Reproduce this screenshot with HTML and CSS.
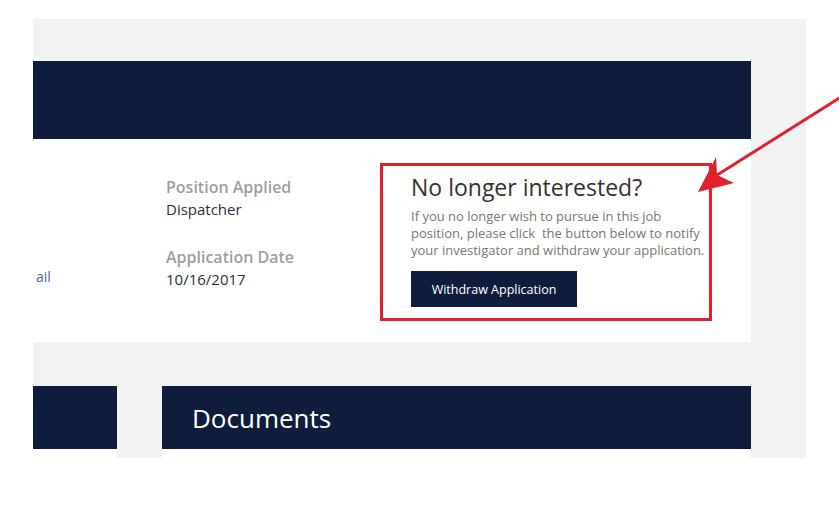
FILE: index.html
```html
<!DOCTYPE html>
<html lang="en">
<head>
<meta charset="utf-8">
<title>Application status</title>
<link rel="stylesheet" href="styles.css">
</head>
<body>
<div class="frame">
  <div class="content">
    <div class="topbar"></div>
    <div class="card">
      <div class="col-contact">
        <a class="email-link" href="#">ail</a>
      </div>
      <div class="col-info">
        <div class="field">
          <div class="field-label">Position Applied</div>
          <div class="field-value">Dispatcher</div>
        </div>
        <div class="field">
          <div class="field-label">Application Date</div>
          <div class="field-value">10/16/2017</div>
        </div>
      </div>
      <div class="withdraw-box">
        <h2 class="withdraw-title">No longer interested?</h2>
        <p class="withdraw-text">If you no longer wish to pursue in this job<br>position, please click&nbsp; the button below to notify<br>your investigator and withdraw your application.</p>
        <button class="withdraw-btn" type="button">Withdraw Application</button>
      </div>
    </div>
    <div class="panels">
      <div class="panel panel-narrow">
        <div class="panel-head"></div>
        <div class="panel-body"></div>
      </div>
      <div class="panel panel-wide">
        <div class="panel-head"><span class="panel-title">Documents</span></div>
        <div class="panel-body"></div>
      </div>
    </div>
  </div>
</div>
<svg class="arrow" width="839" height="505" viewBox="0 0 839 505" aria-hidden="true">
  <line x1="841" y1="97" x2="714" y2="177" stroke="#e0202b" stroke-width="3"/>
  <polygon points="698,192 716,157 717,175 734,183" fill="#e0202b"/>
</svg>
</body>
</html>
```

FILE: styles.css
```css
html, body {
  margin: 0;
  padding: 0;
  background: #ffffff;
}

body {
  font-family: "Open Sans", "Liberation Sans", sans-serif;
  width: 839px;
  height: 505px;
  overflow: hidden;
  position: relative;
}

.frame {
  margin: 19px 0 0 33px;
  width: 773px;
  height: 439px;
  background: #f2f2f2;
  overflow: hidden;
  padding-top: 42px;
  box-sizing: border-box;
}

.content {
  width: 718px;
}

.topbar {
  height: 78px;
  background: #101c3c;
}

.card {
  height: 203px;
  background: #ffffff;
  display: flex;
  overflow: hidden;
}

.col-contact {
  width: 133px;
  padding: 128px 0 0 3px;
  box-sizing: border-box;
}

.email-link {
  display: block;
  font-size: 14px;
  line-height: 20px;
  color: #4767a8;
  text-decoration: none;
}

.col-info {
  width: 214px;
  padding-top: 38px;
  box-sizing: border-box;
  display: flex;
  flex-direction: column;
  gap: 27px;
}

.field-label {
  font-size: 16px;
  line-height: 21px;
  font-weight: 600;
  color: #9d9d9d;
}

.field-value {
  font-size: 15px;
  line-height: 22px;
  color: #2c3140;
}

.withdraw-box {
  margin-top: 24px;
  width: 332px;
  height: 158px;
  box-sizing: border-box;
  border: 3px solid #e0202b;
  padding: 6px 0 0 28px;
}

.withdraw-title {
  margin: 0;
  font-size: 23px;
  line-height: 30px;
  font-weight: 400;
  color: #333333;
}

.withdraw-text {
  margin: 6px 0 0;
  font-size: 13px;
  line-height: 17px;
  color: #777777;
  white-space: nowrap;
}

.withdraw-btn {
  display: block;
  margin-top: 12px;
  width: 166px;
  height: 36px;
  border: 0;
  padding: 0;
  background: #101c3c;
  color: #ffffff;
  font-family: "Open Sans", "Liberation Sans", sans-serif;
  font-size: 12.5px;
}

.panels {
  margin-top: 44px;
  display: flex;
  gap: 45px;
}

.panel {
  background: #ffffff;
}

.panel-narrow {
  width: 84px;
}

.panel-wide {
  flex: 1;
}

.panel-head {
  height: 63px;
  background: #101c3c;
  box-sizing: border-box;
  padding-left: 30px;
}

.panel-title {
  display: block;
  font-size: 26px;
  line-height: 64px;
  color: #ffffff;
}

.panel-body {
  height: 40px;
}

.arrow {
  position: absolute;
  top: 0;
  left: 0;
}
```
